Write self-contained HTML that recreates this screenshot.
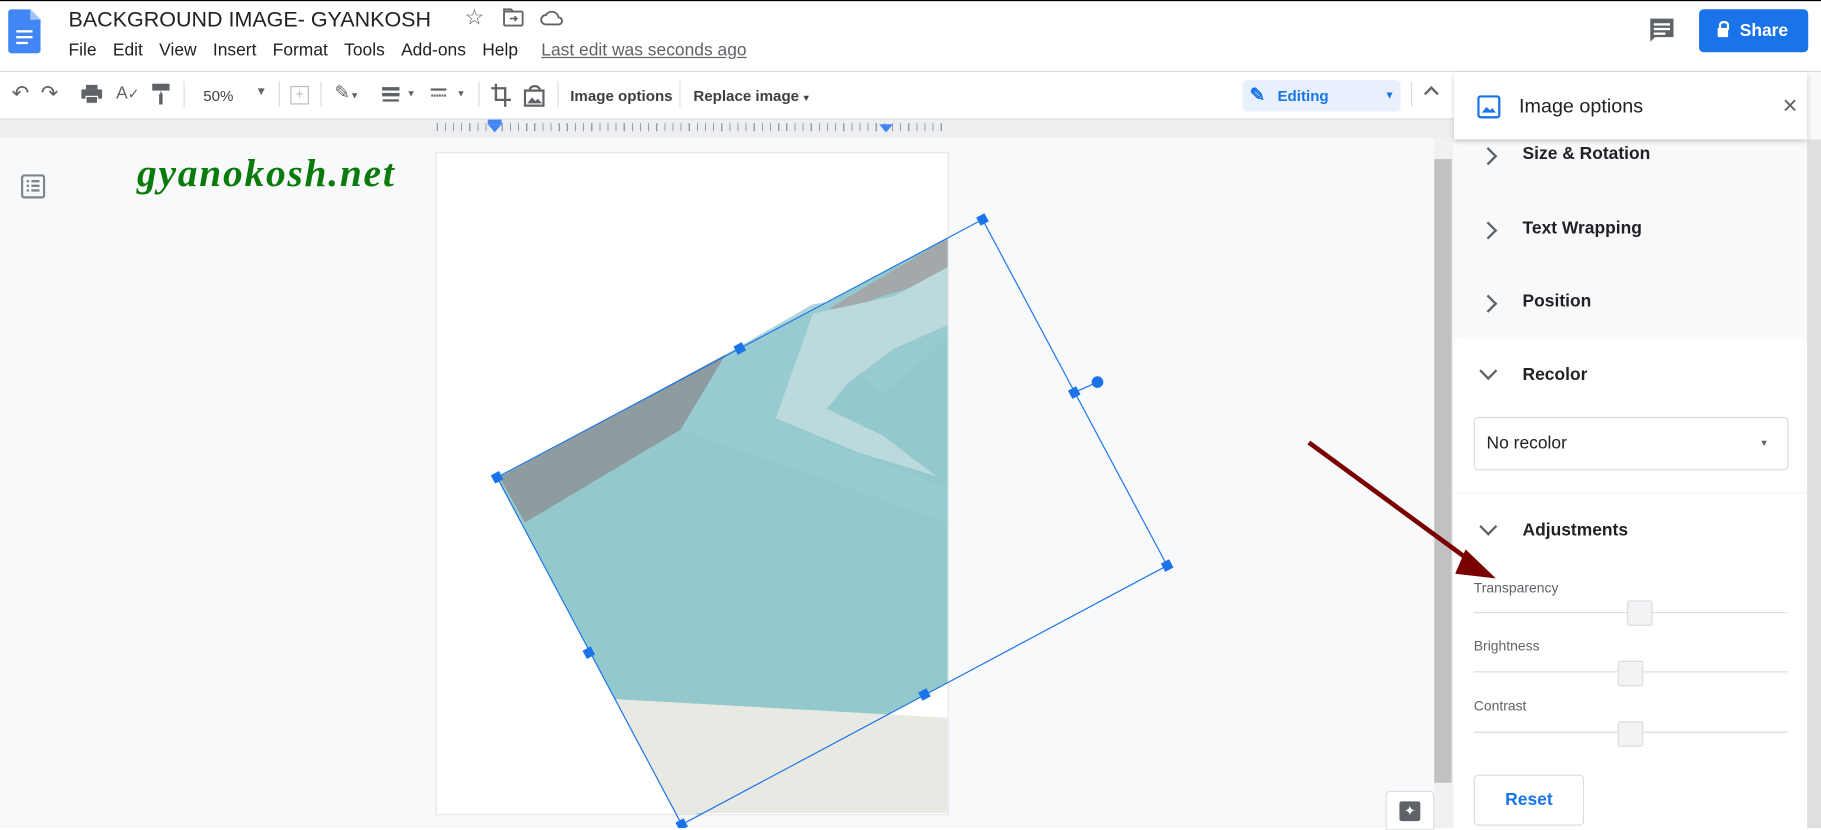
<!DOCTYPE html>
<html><head><meta charset="utf-8"><style>
html,body{margin:0;padding:0;width:1821px;height:828px;overflow:hidden;background:#fff}
#w{position:absolute;left:0;top:0;width:1568px;height:713px;transform:scale(1.16135);transform-origin:0 0;font-family:"Liberation Sans",Arial,sans-serif;color:#202124}
.a{position:absolute}
.menu span{margin-right:14px}
.tb{font-size:13px;color:#3c4043;font-weight:bold}
.sec{position:absolute;left:1252px;width:300px;font-size:15px;font-weight:bold;color:#202124}
.chev{position:absolute;left:24px;width:9px;height:9px;border-right:2px solid #5f6368;border-bottom:2px solid #5f6368}
.lbl{position:absolute;left:1269px;font-size:12px;color:#5f6368}
.trk{position:absolute;left:1269px;width:270px;height:1px;background:#dadce0}
.th{position:absolute;width:20px;height:20px;background:#f1f3f4;border:1px solid #dadce0;border-radius:2px}
</style></head><body><div id="w">
<div class="a" style="left:0;top:0;width:1568px;height:1px;background:#000"></div>
<svg class="a" style="left:7px;top:8px" width="28" height="38"><path d="M3 0h16l9 9v26a3 3 0 0 1-3 3H3a3 3 0 0 1-3-3V3a3 3 0 0 1 3-3z" fill="#4285f4"/><path d="M19 0v9h9z" fill="#a1c2fa"/><rect x="7" y="18" width="14" height="2" fill="#fff"/><rect x="7" y="23" width="14" height="2" fill="#fff"/><rect x="7" y="28" width="10" height="2" fill="#fff"/></svg>
<div class="a" style="left:59px;top:6px;font-size:18.5px;">BACKGROUND IMAGE- GYANKOSH</div>
<div class="a" style="left:400px;top:4px;font-size:19px;color:#5f6368">☆</div>
<svg class="a" style="left:433px;top:7px" width="18" height="16"><rect x="1" y="3" width="16" height="12" rx="1" fill="none" stroke="#5f6368" stroke-width="1.6"/><path d="M1 3V1h6l2 2" fill="none" stroke="#5f6368" stroke-width="1.6"/><path d="M6 9h6M10 7l2 2-2 2" stroke="#5f6368" fill="none" stroke-width="1.4"/></svg>
<svg class="a" style="left:465px;top:8px" width="20" height="14"><path d="M5 13a4 4 0 0 1 0-8 6 6 0 0 1 11 2 3 3 0 0 1 0 6z" fill="none" stroke="#5f6368" stroke-width="1.6"/></svg>
<div class="a menu" style="left:59px;top:35px;font-size:15px;"><span>File</span><span>Edit</span><span>View</span><span>Insert</span><span>Format</span><span>Tools</span><span>Add-ons</span><span>Help</span><span style="margin-left:6px;color:#5f6368;text-decoration:underline">Last edit was seconds ago</span></div>
<svg class="a" style="left:1419px;top:14px" width="24" height="24"><path d="M2 2h20v16H6l-4 4z" fill="#5f6368"/><rect x="5" y="6" width="14" height="2" fill="#fff"/><rect x="5" y="10" width="14" height="2" fill="#fff"/><rect x="5" y="14" width="10" height="2" fill="#fff"/></svg>
<div class="a" style="left:1463px;top:8px;width:94px;height:37px;background:#1a73e8;border-radius:4px;color:#fff;font-size:15px;font-weight:bold;line-height:37px"><span style="position:absolute;left:16px;width:9px;height:8px;background:#fff;border-radius:1px;top:16px"></span><span style="position:absolute;left:17px;top:10px;width:5px;height:6px;border:2px solid #fff;border-bottom:none;border-radius:4px 4px 0 0"></span><span style="position:absolute;left:35px">Share</span></div>
<div class="a" style="left:0;top:61px;width:1568px;height:1px;background:#dadce0"></div>
<div class="a" style="left:10px;top:70px;font-size:18px;color:#5f6368;letter-spacing:10px">↶↷</div>
<svg class="a" style="left:70px;top:73px" width="18" height="16"><rect x="0" y="4" width="18" height="8" rx="1" fill="#5f6368"/><rect x="4" y="0" width="10" height="4" fill="#5f6368"/><rect x="4" y="10" width="10" height="6" fill="#5f6368" stroke="#fff"/></svg>
<div class="a" style="left:100px;top:72px;font-size:15px;color:#5f6368">A<span style="font-size:12px">✓</span></div>
<svg class="a" style="left:131px;top:72px" width="16" height="18"><rect x="0" y="0" width="15" height="6" fill="#5f6368"/><path d="M7 6v3h-1v9h3V9" fill="#5f6368"/></svg>
<div class="a" style="left:158px;top:70px;width:1px;height:22px;background:#dadce0"></div>
<div class="a tb" style="left:175px;top:75px;font-weight:normal">50%</div>
<div class="a" style="left:220px;top:74px;font-size:10px;color:#5f6368">▼</div>
<div class="a" style="left:240px;top:70px;width:1px;height:22px;background:#dadce0"></div>
<div class="a" style="left:250px;top:74px;width:14px;height:14px;border:1px solid #bbb;color:#bbb;font-size:12px;line-height:13px;text-align:center">+</div>
<div class="a" style="left:276px;top:70px;width:1px;height:22px;background:#dadce0"></div>
<div class="a" style="left:288px;top:70px;font-size:16px;color:#5f6368">✎<span style="font-size:8px">▼</span></div>
<div class="a" style="left:329px;top:75px;width:15px;height:3px;background:#5f6368;box-shadow:0 5px 0 #5f6368,0 10px 0 -0.5px #5f6368"></div><div class="a" style="left:350px;top:76px;font-size:8px;color:#5f6368">▼</div>
<div class="a" style="left:371px;top:76px;font-size:11px;color:#5f6368;line-height:5px">━━<br>┅┅</div><div class="a" style="left:393px;top:76px;font-size:8px;color:#5f6368">▼</div>
<div class="a" style="left:412px;top:70px;width:1px;height:22px;background:#dadce0"></div>
<svg class="a" style="left:422px;top:72px" width="18" height="20"><path d="M5 0v14h13M1 4h12v16" fill="none" stroke="#5f6368" stroke-width="2"/></svg>
<svg class="a" style="left:451px;top:72px" width="18" height="20"><rect x="1" y="6" width="16" height="13" fill="none" stroke="#5f6368" stroke-width="2"/><path d="M3 17l4-5 3 3 2-2 4 4z" fill="#5f6368"/><path d="M5 5a5 5 0 0 1 9 0" fill="none" stroke="#5f6368" stroke-width="2"/></svg>
<div class="a" style="left:480px;top:70px;width:1px;height:22px;background:#dadce0"></div>
<div class="a tb" style="left:491px;top:75px">Image options</div>
<div class="a" style="left:585px;top:70px;width:1px;height:22px;background:#dadce0"></div>
<div class="a tb" style="left:597px;top:75px">Replace image<span style="font-size:8px"> ▼</span></div>
<div class="a" style="left:1070px;top:69px;width:136px;height:27px;background:#e8f0fe;border-radius:4px;color:#1a73e8;font-size:13px;font-weight:bold;line-height:27px"><span style="position:absolute;left:6px;font-size:16px">✎</span><span style="position:absolute;left:30px">Editing</span><span style="position:absolute;left:122px;font-size:9px">▼</span></div>
<div class="a" style="left:1215px;top:70px;width:1px;height:22px;background:#dadce0"></div>
<div class="a" style="left:1228px;top:76px;width:7px;height:7px;border-left:2px solid #5f6368;border-top:2px solid #5f6368;transform:rotate(45deg)"></div>
<div class="a" style="left:0;top:102px;width:1252px;height:16px;background:#edeef0;border-top:1px solid #dadce0"></div>
<div class="a" style="left:376px;top:106px;width:440px;height:7px;background:repeating-linear-gradient(90deg,#9aa0a6 0 1px,transparent 1px 7px)"></div>
<div class="a" style="left:420px;top:103px;width:12px;height:4px;background:#4285f4"></div>
<div class="a" style="left:420px;top:107px;border:6px solid transparent;border-top:7px solid #4285f4"></div>
<div class="a" style="left:757px;top:107px;border:6px solid transparent;border-top:7px solid #4285f4"></div>
<div class="a" style="left:0;top:119px;width:1252px;height:594px;background:#f8f9fa"></div>
<div class="a" style="left:1235px;top:119px;width:16px;height:594px;background:#f1f1f1"></div>
<div class="a" style="left:1235px;top:137px;width:15px;height:537px;background:#c1c1c1"></div>
<svg class="a" style="left:18px;top:150px" width="21" height="21"><rect x="1" y="1" width="19" height="19" rx="2" fill="none" stroke="#80868b" stroke-width="2"/><path d="M5 6h2M9 6h7M5 10h2M9 10h7M5 14h2M9 14h7" stroke="#80868b" stroke-width="2"/></svg>
<div class="a" style="left:118px;top:131px;font-family:'Liberation Serif',serif;font-style:italic;font-weight:bold;font-size:34px;color:#0a7a0a;letter-spacing:1.5px">gyanokosh.net</div>
<div class="a" style="left:376px;top:132px;width:440px;height:569px;background:#fff;box-shadow:0 0 0 1px #e6e6e6"></div>
<svg class="a" style="left:0;top:0" width="1252" height="713">
<defs><clipPath id="pg"><rect x="376" y="132" width="440" height="569"/></clipPath></defs>
<g clip-path="url(#pg)">
<polygon points="428,411 846,189 1005,487 587,710" fill="#93c9cd"/>
<polygon points="430,411 625,305 586,370 452,450" fill="#8e9ca0"/>
<polygon points="586,370 625,305 700,262 816,245 816,290 760,340 720,300 690,360 710,380 816,420 816,450" fill="#98cbd2" opacity=".8"/>
<polygon points="715,265 816,205 816,238 760,255 720,270" fill="#a3a9ab"/>
<polygon points="668,360 700,270 770,255 816,230 816,280 770,300 730,330 712,352 760,375 806,410 790,405 740,390" fill="#bcdadc"/>
<polygon points="530,602 816,618 816,700 600,700 587,710" fill="#e9e9e4"/>
</g>
<polygon points="428,411 846,189 1005,487 587,710" fill="none" stroke="#1a73e8" stroke-width="1"/>
<line x1="925" y1="338" x2="945" y2="329" stroke="#1a73e8"/>
<circle cx="945" cy="329" r="5" fill="#1a73e8"/>
<g fill="#1a73e8">
<rect x="424" y="407" width="8" height="8" transform="rotate(-28 428 411)"/>
<rect x="842" y="185" width="8" height="8" transform="rotate(-28 846 189)"/>
<rect x="1001" y="483" width="8" height="8" transform="rotate(-28 1005 487)"/>
<rect x="583" y="706" width="8" height="8" transform="rotate(-28 587 710)"/>
<rect x="633" y="296" width="8" height="8" transform="rotate(-28 637 300)"/>
<rect x="921" y="334" width="8" height="8" transform="rotate(-28 925 338)"/>
<rect x="792" y="594" width="8" height="8" transform="rotate(-28 796 598)"/>
<rect x="503" y="558" width="8" height="8" transform="rotate(-28 507 562)"/>
</g>
</svg>
<div class="a" style="left:1193px;top:681px;width:40px;height:32px;background:#fff;border:1px solid #dadce0;border-radius:4px 4px 0 0"><div style="position:absolute;left:11px;top:8px;width:18px;height:17px;background:#5f6368;border-radius:2px;color:#fff;font-size:12px;text-align:center;line-height:17px">✦</div></div>
<div class="a" style="left:1252px;top:62px;width:316px;height:651px;background:#f8f9fa"></div>
<div class="a" style="left:1556px;top:120px;width:12px;height:593px;background:#e0e0e0"></div>
<div class="a" style="left:1252px;top:62px;width:304px;height:58px;background:#fff;box-shadow:0 2px 4px rgba(0,0,0,.2)"></div>
<svg class="a" style="left:1272px;top:82px" width="20" height="20"><rect x="1" y="1" width="18" height="18" rx="2" fill="none" stroke="#1a73e8" stroke-width="2"/><path d="M4 15l4-5 3 3 2-2 3 4z" fill="#1a73e8"/></svg>
<div class="a" style="left:1308px;top:82px;font-size:17px">Image options</div>
<div class="a" style="left:1535px;top:78px;font-size:22px;color:#5f6368">×</div>
<div class="sec" style="top:124px"><div class="chev" style="top:5px;transform:rotate(-45deg)"></div><span style="position:absolute;left:59px">Size &amp; Rotation</span></div>
<div class="sec" style="top:188px"><div class="chev" style="top:5px;transform:rotate(-45deg)"></div><span style="position:absolute;left:59px">Text Wrapping</span></div>
<div class="sec" style="top:251px"><div class="chev" style="top:5px;transform:rotate(-45deg)"></div><span style="position:absolute;left:59px">Position</span></div>
<div class="a" style="left:1252px;top:290px;width:304px;height:423px;background:#fff;border-radius:8px 8px 0 0"></div>
<div class="sec" style="top:314px"><div class="chev" style="top:0px;transform:rotate(45deg)"></div><span style="position:absolute;left:59px">Recolor</span></div>
<div class="a" style="left:1269px;top:359px;width:269px;height:44px;border:1px solid #dadce0;border-radius:4px;font-size:15px;line-height:44px"><span style="position:absolute;left:10px">No recolor</span><span style="position:absolute;left:245px;font-size:8px;color:#5f6368">▼</span></div>
<div class="a" style="left:1252px;top:424px;width:304px;height:1px;background:#f1f3f4"></div>
<div class="sec" style="top:448px"><div class="chev" style="top:0px;transform:rotate(45deg)"></div><span style="position:absolute;left:59px">Adjustments</span></div>
<div class="lbl" style="top:499px">Transparency</div><div class="trk" style="top:527px"></div><div class="th" style="left:1401px;top:517px"></div>
<div class="lbl" style="top:549px">Brightness</div><div class="trk" style="top:578px"></div><div class="th" style="left:1393px;top:569px"></div>
<div class="lbl" style="top:601px">Contrast</div><div class="trk" style="top:630px"></div><div class="th" style="left:1393px;top:621px"></div>
<div class="a" style="left:1269px;top:667px;width:93px;height:42px;border:1px solid #dadce0;border-radius:4px;color:#1a73e8;font-size:15px;font-weight:bold;text-align:center;line-height:42px">Reset</div>
<svg class="a" style="left:0;top:0" width="1568" height="713"><line x1="1127" y1="381" x2="1270" y2="486" stroke="#7a0000" stroke-width="4"/><polygon points="1288,498 1262,473 1253,494" fill="#7a0000"/></svg>
</div></body></html>
